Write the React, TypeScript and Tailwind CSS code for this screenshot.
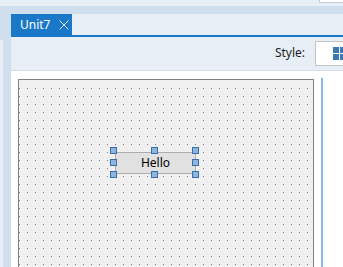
import React from 'react';

const handles: [number, number][] = [
  [91, 67], [132, 67], [173, 67],
  [91, 79], [173, 79],
  [91, 91], [132, 91], [173, 91],
];

const App: React.FC = () => {
  return (
    <div className="w-[343px] h-[267px] overflow-hidden bg-[#e7eef6] flex flex-col font-['Noto_Sans','Liberation_Sans',sans-serif]">
      {/* top strip */}
      <div className="h-[6px] flex justify-end">
        <div className="w-[24px] h-[3px] bg-white border-l border-b border-[#c3ccd6]" />
      </div>
      <div className="h-[8px] bg-[#d0dfee]" />

      <div className="flex-1 flex min-h-0">
        {/* left rail */}
        <div className="w-[3px] flex flex-col">
          <div className="h-[26px] bg-[#d0dfee]" />
          <div className="flex-1 bg-[#e7eef6]" />
        </div>
        <div className="w-[8px] bg-[#d0dfee]" />

        <div className="flex-1 flex flex-col min-w-0">
          {/* tab row */}
          <div className="h-[21px] flex items-end">
            <div className="w-[61px] h-[21px] bg-[#1b78c8] flex items-center pl-[9px] text-white text-[12px] leading-none">
              <span>Unit7</span>
              <svg className="ml-[9px]" width="10" height="10" viewBox="0 0 10 10">
                <path d="M0.5 0.5L9.5 9.5M9.5 0.5L0.5 9.5" stroke="#dbe8f5" strokeWidth="1" />
              </svg>
            </div>
          </div>
          <div className="h-[2px] bg-[#1b78c8]" />

          {/* toolbar */}
          <div className="h-[34px] flex items-center justify-end border-b border-[#d6dee7]">
            <span className="text-[12px] text-[#1e1e1e] mr-[10px] mb-[1px]">Style:</span>
            <div className="w-[28px] h-[25px] bg-white border-l border-t border-b border-[#c4c4c4] flex items-center pl-[17px] overflow-hidden">
              <div className="grid grid-cols-[6px_6px] gap-[1px] flex-none">
                <div className="w-[6px] h-[6px] bg-[#3c78b6]" />
                <div className="w-[6px] h-[6px] bg-[#3c78b6]" />
                <div className="w-[6px] h-[6px] bg-[#3c78b6]" />
                <div className="w-[6px] h-[6px] bg-[#3c78b6]" />
              </div>
            </div>
          </div>

          {/* designer surface */}
          <div className="flex-1 bg-white flex items-stretch pl-[7px] min-h-0">
            <div className="pt-[8px] flex-none flex">
              <div className="w-[296px] h-[200px] border border-[#808080] bg-[#f0f0f0] relative">
                <div className="absolute inset-x-0 top-[8px] bottom-0 bg-[#f0f0f0] bg-[linear-gradient(to_bottom,transparent_1px,#f0f0f0_1px),linear-gradient(to_right,#808080_1px,transparent_1px)] bg-[length:8px_8px]" />
                <div className="absolute left-[96px] top-[72px] w-[81px] h-[22px] bg-[#e1e1e1] border border-[#adadad] flex items-center justify-center text-[12px] text-black leading-none">
                  Hello
                </div>
                {handles.map(([x, y], i) => (
                  <div
                    key={i}
                    className="absolute w-[7px] h-[7px] bg-[#8db5e2] border border-[#3a6ea8]"
                    style={{ left: x, top: y }}
                  />
                ))}
              </div>
            </div>
            <div className="ml-[7px] pt-[7px] flex-none flex">
              <div className="w-[2px] bg-[#8cb8e8]" />
            </div>
          </div>
        </div>
      </div>
    </div>
  );
};

export default App;
